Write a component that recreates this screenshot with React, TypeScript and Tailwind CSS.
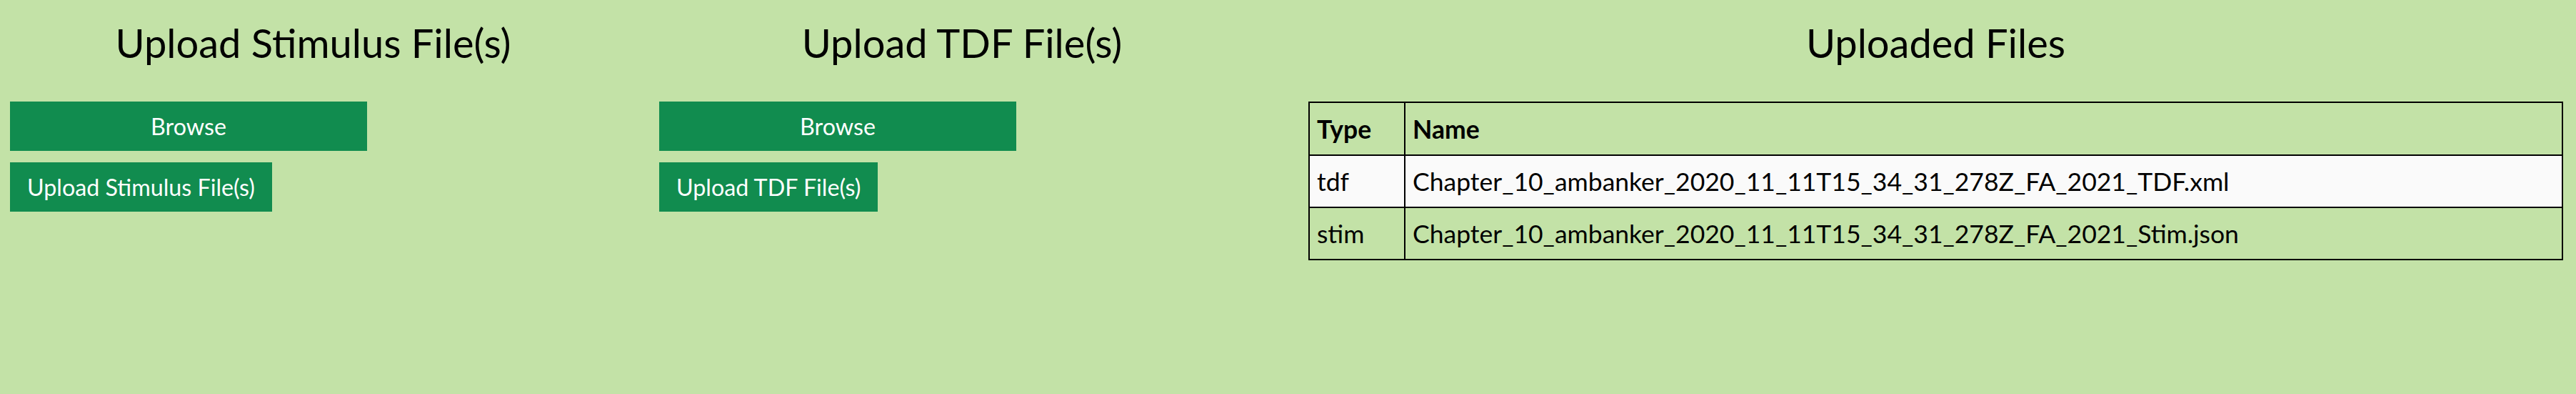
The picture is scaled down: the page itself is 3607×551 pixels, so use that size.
import React from "react";

const rows = [
  { type: "tdf", name: "Chapter_10_ambanker_2020_11_11T15_34_31_278Z_FA_2021_TDF.xml", bg: "bg-[#fafafa]" },
  { type: "stim", name: "Chapter_10_ambanker_2020_11_11T15_34_31_278Z_FA_2021_Stim.json", bg: "" },
];

function UploadCol({ title, label, width }: { title: string; label: string; width: string }) {
  return (
    <div className={`${width} flex flex-col`}>
      <h3 className="text-center text-[56px] leading-[1.2] font-normal text-black mt-[26px] mb-[49px]">{title}</h3>
      <button className="w-[500px] h-[69px] bg-[#118c4f] text-white text-[32.25px] leading-none">Browse</button>
      <div className="mt-[16px]">
        <button className="h-[69px] px-[24px] bg-[#118c4f] text-white text-[32.25px] leading-none">{label}</button>
      </div>
    </div>
  );
}

export default function App() {
  return (
    <div className="w-[3607px] h-[551px] bg-[#c3e2a7] font-['Lato',sans-serif] text-black">
      <div className="flex pl-[14px]">
        <UploadCol title="Upload Stimulus File(s)" label="Upload Stimulus File(s)" width="w-[849px]" />
        <div className="ml-[60px]">
          <UploadCol title="Upload TDF File(s)" label="Upload TDF File(s)" width="w-[848px]" />
        </div>
        <div className="ml-[61px] w-[1757px] flex flex-col">
          <h3 className="text-center text-[56px] leading-[1.2] font-normal mt-[26px] mb-[49px]">Uploaded Files</h3>
          <table className="w-full border-collapse border-2 border-black text-[35.5px]">
            <thead>
              <tr>
                <th className="w-[134px] border-2 border-black text-left font-bold px-[10px] h-[74px] leading-[1.5]">Type</th>
                <th className="border-2 border-black text-left font-bold px-[10px] leading-[1.5]">Name</th>
              </tr>
            </thead>
            <tbody>
              {rows.map((r) => (
                <tr key={r.type} className={r.bg}>
                  <td className="border-2 border-black px-[10px] h-[73px] leading-[1.5]">{r.type}</td>
                  <td className="border-2 border-black px-[10px] leading-[1.5]">{r.name}</td>
                </tr>
              ))}
            </tbody>
          </table>
        </div>
      </div>
    </div>
  );
}
